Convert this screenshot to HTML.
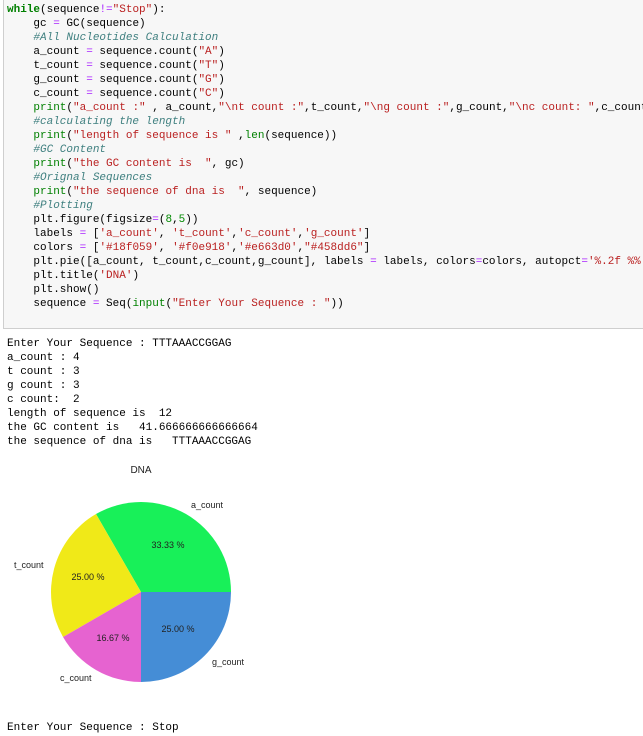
<!DOCTYPE html>
<html><head><meta charset="utf-8"><style>
body{margin:0;background:#fff;width:643px;height:736px;overflow:hidden;position:relative;font-family:"Liberation Mono",monospace;font-size:11px;}
.cell{position:absolute;left:3px;top:-2px;width:645px;height:331px;background:#f7f7f7;border:1px solid #cfcfcf;box-sizing:border-box;}
pre{margin:0;font-family:"Liberation Mono",monospace;font-size:11px;line-height:14px;white-space:pre;}
.code{position:absolute;left:7px;top:3px;color:#000;}
.out{position:absolute;left:7px;top:337px;color:#000;}
.k{color:#008000;font-weight:bold}.b{color:#008000}.s{color:#ba2121}.c{color:#408080;font-style:italic}.o{color:#aa22ff}.n{color:#080}
svg text{font-family:"Liberation Sans",sans-serif;font-size:9px;fill:#222}
</style></head><body>
<div class="cell"></div>
<pre class="code"><span class="k">while</span>(sequence<span class="o">!=</span><span class="s">"Stop"</span>):
    gc <span class="o">=</span> GC(sequence)
    <span class="c">#All Nucleotides Calculation</span>
    a_count <span class="o">=</span> sequence.count(<span class="s">"A"</span>)
    t_count <span class="o">=</span> sequence.count(<span class="s">"T"</span>)
    g_count <span class="o">=</span> sequence.count(<span class="s">"G"</span>)
    c_count <span class="o">=</span> sequence.count(<span class="s">"C"</span>)
    <span class="b">print</span>(<span class="s">"a_count :"</span> , a_count,<span class="s">"\nt count :"</span>,t_count,<span class="s">"\ng count :"</span>,g_count,<span class="s">"\nc count: "</span>,c_count)
    <span class="c">#calculating the length</span>
    <span class="b">print</span>(<span class="s">"length of sequence is "</span> ,<span class="b">len</span>(sequence))
    <span class="c">#GC Content</span>
    <span class="b">print</span>(<span class="s">"the GC content is  "</span>, gc)
    <span class="c">#Orignal Sequences</span>
    <span class="b">print</span>(<span class="s">"the sequence of dna is  "</span>, sequence)
    <span class="c">#Plotting</span>
    plt.figure(figsize<span class="o">=</span>(<span class="n">8</span>,<span class="n">5</span>))
    labels <span class="o">=</span> [<span class="s">'a_count'</span>, <span class="s">'t_count'</span>,<span class="s">'c_count'</span>,<span class="s">'g_count'</span>]
    colors <span class="o">=</span> [<span class="s">'#18f059'</span>, <span class="s">'#f0e918'</span>,<span class="s">'#e663d0'</span>,<span class="s">"#458dd6"</span>]
    plt.pie([a_count, t_count,c_count,g_count], labels <span class="o">=</span> labels, colors<span class="o">=</span>colors, autopct<span class="o">=</span><span class="s">'%.2f %%'</span>)
    plt.title(<span class="s">'DNA'</span>)
    plt.show()
    sequence <span class="o">=</span> Seq(<span class="b">input</span>(<span class="s">"Enter Your Sequence : "</span>))</pre>
<pre class="out">Enter Your Sequence : TTTAAACCGGAG
a_count : 4
t count : 3
g count : 3
c count:  2
length of sequence is  12
the GC content is   41.666666666666664
the sequence of dna is   TTTAAACCGGAG</pre>
<svg width="643" height="736" style="position:absolute;left:0;top:0">
<path d="M141,592 L231,592 A90,90 0 0,0 96,514.06 Z" fill="#18f059"/>
<path d="M141,592 L96,514.06 A90,90 0 0,0 63.06,637 Z" fill="#f0e918"/>
<path d="M141,592 L63.06,637 A90,90 0 0,0 141,682 Z" fill="#e663d0"/>
<path d="M141,592 L141,682 A90,90 0 0,0 231,592 Z" fill="#458dd6"/>
<text x="141" y="473" text-anchor="middle" font-size="10" style="font-size:10px">DNA</text>
<text x="191" y="508">a_count</text>
<text x="14" y="568">t_count</text>
<text x="60" y="681">c_count</text>
<text x="212" y="665">g_count</text>
<text x="168" y="548" text-anchor="middle">33.33 %</text>
<text x="88" y="580" text-anchor="middle">25.00 %</text>
<text x="113" y="641" text-anchor="middle">16.67 %</text>
<text x="178" y="632" text-anchor="middle">25.00 %</text>
</svg>
<pre style="position:absolute;left:7px;top:721px">Enter Your Sequence : Stop</pre>
</body></html>
